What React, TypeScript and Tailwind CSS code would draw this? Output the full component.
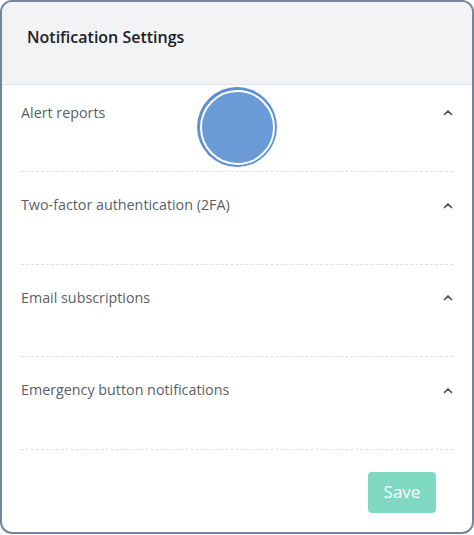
import React from "react";

const sections = [
  "Alert reports",
  "Two-factor authentication (2FA)",
  "Email subscriptions",
  "Emergency button notifications",
];

function ChevronUp() {
  return (
    <svg width="10" height="7" viewBox="0 0 10 7" fill="none">
      <polyline points="1.5,5.5 5,2 8.5,5.5" stroke="#4b5057" strokeWidth="1.7" strokeLinecap="round" strokeLinejoin="round" />
    </svg>
  );
}

export default function App() {
  return (
    <div className="h-[535px] w-[474px] bg-white" style={{ fontFamily: '"Open Sans", sans-serif' }}>
      <div className="relative flex h-[534px] flex-col overflow-hidden rounded-[12px] border-2 border-[#74869b] bg-white">
        {/* header */}
        <div className="flex h-[83px] shrink-0 items-center border-b border-[#e2e4e8] bg-[#f2f3f5] pb-[12px] pl-[25px]">
          <h1 className="text-[16px] font-semibold text-[#1d2126]">Notification Settings</h1>
        </div>

        {/* sections */}
        <div className="flex flex-col pl-[19px] pr-[19px]">
          {sections.map((label, i) => (
            <div
              key={label}
              className={`border-b border-dashed border-[#dcdfe3] pb-[48.5px] ${i === 0 ? "pt-[17.5px]" : "pt-[23px]"}`}
            >
              <div className="flex h-[20px] items-center justify-between">
                <span className="text-[14.3px] leading-[20px] text-[#5a5f66]">{label}</span>
                <ChevronUp />
              </div>
            </div>
          ))}
        </div>

        <div className="flex justify-end pr-[36px] pt-[22px]">
          <button className="h-[41px] w-[68px] rounded-[4px] bg-[#7fd8c1] text-[17px] text-white">Save</button>
        </div>

        {/* touch indicator */}
        <div className="absolute left-[195px] top-[85px] flex h-[80px] w-[80px] items-center justify-center rounded-full bg-[#5f91d2]">
          <div className="h-[75px] w-[75px] rounded-full border-2 border-white bg-[#6a9bd6]" />
        </div>
      </div>
    </div>
  );
}
